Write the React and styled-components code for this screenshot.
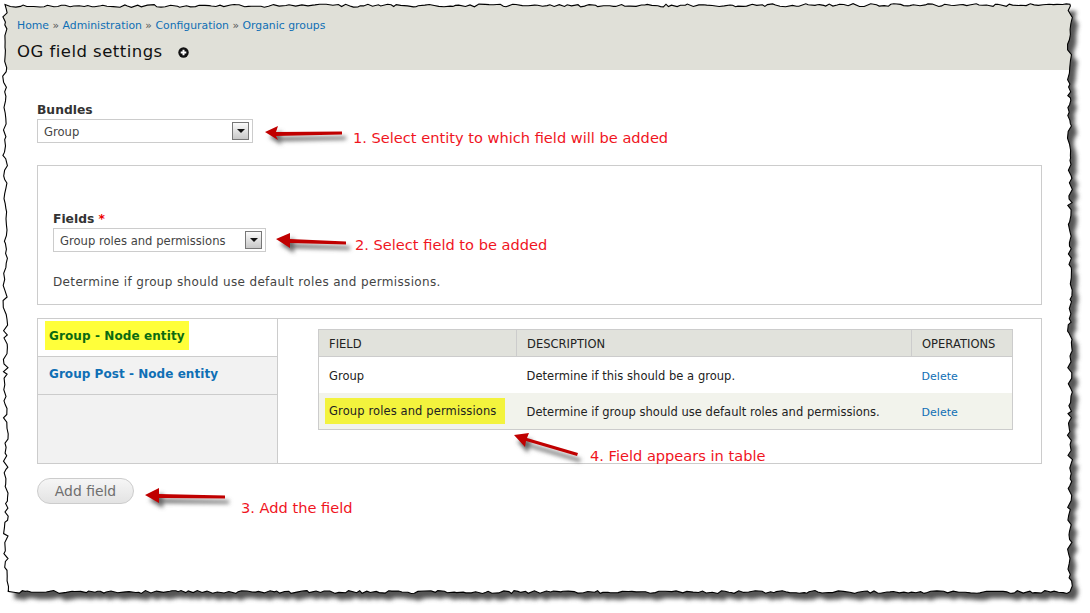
import React from "react";
import styled, { createGlobalStyle } from "styled-components";

const W = 1090, H = 613;
const Global = createGlobalStyle`
  html, body { margin: 0; padding: 0; background: #fff; }
  body { font-family: "DejaVu Sans", Verdana, sans-serif; color: #3b3b3b; width: ${W}px; height: ${H}px; overflow: hidden; }
`;

const Page = styled.div`position: relative; width: ${W}px; height: ${H}px; overflow: hidden;`;
const Frame = styled.main`margin: 5px 0 0 4px; width: 1067px; height: 587px; display: flex; flex-direction: column;`;
const Header = styled.header`height: 65px; background: #e0e0d8; padding: 14px 13px 0; box-sizing: border-box;`;
const Crumbs = styled.nav`font-size: 10.85px; line-height: 14px; color: #555;`;
const Crumb = styled.a`color: #0f6fb5; text-decoration: none;`;
const TitleRow = styled.div`display: flex; align-items: center; gap: 15px; margin-top: 7px;`;
const Title = styled.h1`margin: 0; font-size: 16.5px; line-height: 24px; font-weight: 400; color: #111; letter-spacing: .47px;`;
const Content = styled.div`padding: 33px 28px 0 33px; display: flex; flex-direction: column;`;
const Label = styled.label`display: block; font-size: 12.3px; line-height: 14px; font-weight: 700; color: #333; margin-bottom: 2px;`;
const Req = styled.span`color: #e00;`;
const Select = styled.div`
  box-sizing: border-box; display: flex; align-items: center; justify-content: space-between;
  width: ${p => p.$w}px; height: 24px; border: 1px solid #ccc; padding: 0 3px 0 6px;
  font-size: 11.6px; color: #444; background: #fff;
`;
const SelectText = styled.span`padding-top: 2px;`;
const SelectBtn = styled.span`
  box-sizing: border-box; width: 17px; height: 18px; border: 1px solid #777; display: flex; align-items: center; justify-content: center;
  background: linear-gradient(#fafafa, #c8c8c8);
  &::after { content: ""; border: 4px solid transparent; border-top: 4px solid #111; border-bottom: 0; }
`;
const Fieldset = styled.section`
  box-sizing: border-box; width: 1005px; height: 140px; margin-top: 22px; border: 1px solid #ccc; padding: 46px 15px 0;
`;
const Desc = styled.p`margin: 22px 0 0; font-size: 12px; line-height: 16px; color: #444; letter-spacing: .35px;`;
const Tabs = styled.section`
  box-sizing: border-box; width: 1005px; height: 146px; margin-top: 13px; border: 1px solid #ccc; display: flex;
`;
const TabList = styled.div`width: 240px; box-sizing: border-box; background: #f2f2f2; border-right: 1px solid #ccc;`;
const Tab = styled.div`
  box-sizing: border-box; height: 38px; padding: ${p => p.$active ? "2px 7px" : "9px 11px"};
  border-bottom: 1px solid #ccc; background: ${p => p.$active ? "#fff" : "#f2f2f2"};
  font-size: 12px; line-height: 16px; font-weight: 700; letter-spacing: ${p => p.$active ? .1 : .05}px; color: ${p => p.$active ? "#0b6b12" : "#0f6fb5"};
`;
const Mark = styled.span`display: inline-block; background: #ffff3a; padding: 7px 4px 6px;`;
const TabBody = styled.div`flex: 1; padding: 10px 0 0 40px;`;
const Table = styled.table`width: 694px; border-collapse: collapse; table-layout: fixed; border: 1px solid #ccc; font-size: 11.5px; letter-spacing: .03px;`;
const Th = styled.th`
  text-align: left; font-weight: 400; height: 27px; padding: 2px 10px 0; background: #e1e2dc; color: #222;
  border: 1px solid #ccc; border-width: 0 1px 1px 0; width: ${p => p.$w}px; box-sizing: border-box; font-size: 11.5px;
  text-transform: uppercase; white-space: nowrap;
`;
const Row = styled.tr`background: ${p => p.$even ? "#f2f3ec" : "#fff"};`;
const Td = styled.td`
  height: ${p => p.$even ? 37 : 36}px; padding: ${p => p.$even ? 2 : 3}px 10px 0; color: #222; box-sizing: border-box; white-space: nowrap;
`;
const CellMark = styled.span`display: inline-block; background: #f3f33d; margin: -1px -4px 0; padding: 6px 9px 6px 4px; letter-spacing: .12px;`;
const LinkText = styled.a`color: #0f6fb5; font-size: 11px;`;
const Button = styled.button`
  width: 97px; height: 26px; margin-top: 14px; border: 1px solid #ccc; border-radius: 13px;
  background: linear-gradient(#f6f6f6, #e3e3e3); color: #6f6f6f; font: 400 13.9px "DejaVu Sans", sans-serif; padding: 0;
`;
const Note = styled.span`
  position: absolute; left: ${p => p.$x}px; top: ${p => p.$y}px; font-size: 14.6px; line-height: 18px; color: #f0141e; white-space: nowrap;
`;
const Overlay = styled.svg`position: absolute; left: 0; top: 0; pointer-events: none;`;

// Torn paper edge built from a seeded jitter
function rng(seed) { let s = seed; return () => (s = (s * 16807) % 2147483647) / 2147483647; }
function tornPath() {
  const r = rng(4711), pts = [];
  const L = 5, T = 6, R = 1070, B = 592;
  const edge = (x0, y0, x1, y1, amp) => {
    const len = Math.hypot(x1 - x0, y1 - y0), ux = (x1 - x0) / len, uy = (y1 - y0) / len;
    let d = 0;
    while (d < len) {
      const o = (r() - .5) * amp;
      pts.push([x0 + ux * d - uy * o, y0 + uy * d + ux * o]);
      d += 2 + r() * 5;
    }
  };
  edge(L, T, R, T - 1, 3); edge(R, T, R, B, 5); edge(R, B, L + 1, B, 3); edge(L + 1, B, L, T, 5);
  return "M" + pts.map(p => p[0].toFixed(1) + " " + p[1].toFixed(1)).join("L") + "Z";
}
const torn = tornPath();
const outside = `M0 0H${W}V${H}H0Z ${torn}`;

const arrows = [
  [265, 132, 278, 126, 276, 133, 342, 133, 278, 140],
  [276, 239, 290, 233, 290, 240, 346, 243, 290, 248],
  [145, 495, 159, 488, 159, 495, 225, 497, 159, 503],
];
const Arrow = ({ a, filter }) => {
  const [tx, ty, ax, ay, sx, sy, ex, ey, bx, by] = a;
  const d = `M${tx} ${ty}L${ax} ${ay}L${sx} ${sy - 1}L${ex} ${ey - 1.5}L${ex} ${ey + 1.5}L${sx} ${sy + 3}L${bx} ${by}Z`;
  return <path d={d} fill={filter ? "#666" : "#c00000"} filter={filter ? "url(#soft)" : undefined} transform={filter ? "translate(4 5)" : undefined} />;
};
const arrow4 = "M514 435L529 433L527 438L578 453L577 456L526 441L525 447Z";

export default function App() {
  return (
    <Page>
      <Global />
      <Frame>
        <Header>
          <Crumbs>
            <Crumb>Home</Crumb> » <Crumb>Administration</Crumb> » <Crumb>Configuration</Crumb> » <Crumb>Organic groups</Crumb>
          </Crumbs>
          <TitleRow>
            <Title>OG field settings</Title>
            <svg width="11" height="11" viewBox="0 0 11 11" aria-hidden="true">
              <circle cx="5.5" cy="5.5" r="5.2" fill="#111" />
              <path d="M5.5 2.7v5.6M2.7 5.5h5.6" stroke="#fff" strokeWidth="2" />
            </svg>
          </TitleRow>
        </Header>
        <Content>
          <Label>Bundles</Label>
          <Select $w={216}><SelectText>Group</SelectText><SelectBtn /></Select>
          <Fieldset>
            <Label>Fields <Req>*</Req></Label>
            <Select $w={213}><SelectText>Group roles and permissions</SelectText><SelectBtn /></Select>
            <Desc>Determine if group should use default roles and permissions.</Desc>
          </Fieldset>
          <Tabs>
            <TabList>
              <Tab $active><Mark>Group - Node entity</Mark></Tab>
              <Tab>Group Post - Node entity</Tab>
            </TabList>
            <TabBody>
              <Table>
                <thead>
                  <tr><Th $w={198}>Field</Th><Th $w={395}>Description</Th><Th $w={101}>Operations</Th></tr>
                </thead>
                <tbody>
                  <Row><Td>Group</Td><Td>Determine if this should be a group.</Td><Td><LinkText>Delete</LinkText></Td></Row>
                  <Row $even><Td $even><CellMark>Group roles and permissions</CellMark></Td><Td $even>Determine if group should use default roles and permissions.</Td><Td $even><LinkText>Delete</LinkText></Td></Row>
                </tbody>
              </Table>
            </TabBody>
          </Tabs>
          <div><Button>Add field</Button></div>
        </Content>
      </Frame>

      <Overlay width={W} height={H} viewBox={`0 0 ${W} ${H}`} aria-hidden="true">
        <defs>
          <filter id="soft" x="-20%" y="-50%" width="140%" height="200%"><feGaussianBlur stdDeviation="2" /></filter>
          <filter id="edge" x="-2%" y="-2%" width="104%" height="104%"><feGaussianBlur stdDeviation="2" /></filter>
          <clipPath id="out"><path d={outside} clipRule="evenodd" /></clipPath>
        </defs>
        <path d={outside} fill="#fff" fillRule="evenodd" />
        <g clipPath="url(#out)">
          <path d={torn} fill="#555" filter="url(#edge)" transform="translate(6 7)" />
        </g>
        <path d={torn} fill="none" stroke="#000" strokeWidth="1.1" />
        {arrows.map((a, i) => <Arrow key={i} a={a} filter />)}
        <path d={arrow4} fill="#666" filter="url(#soft)" transform="translate(3 6)" />
        {arrows.map((a, i) => <Arrow key={i} a={a} />)}
        <path d={arrow4} fill="#c00000" />
      </Overlay>
      <Note $x={353} $y={129}>1. Select entity to which field will be added</Note>
      <Note $x={355} $y={236}>2. Select field to be added</Note>
      <Note $x={241} $y={499}>3. Add the field</Note>
      <Note $x={590} $y={447}>4. Field appears in table</Note>
    </Page>
  );
}
